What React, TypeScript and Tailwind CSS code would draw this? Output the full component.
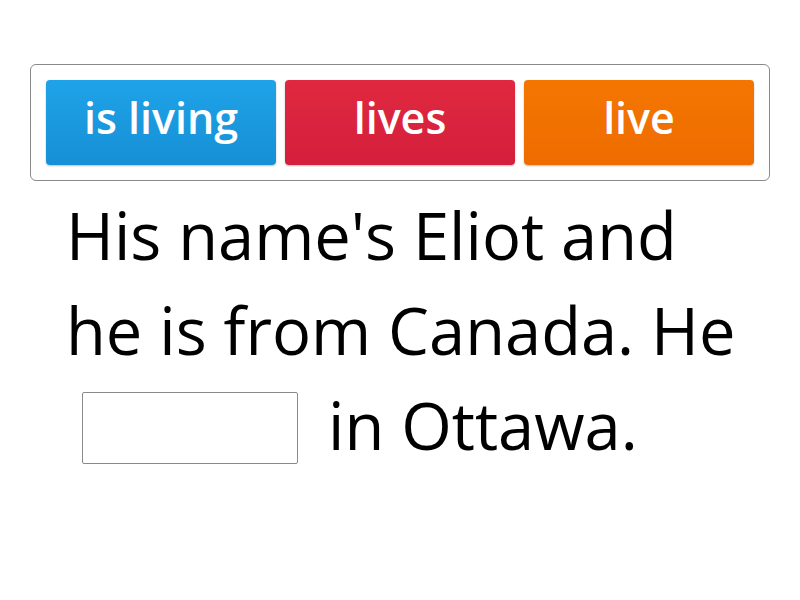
export default function App() {
  const words = [
    { label: 'is living', cls: 'bg-gradient-to-b from-[#1fa3e8] to-[#168fd6]' },
    { label: 'lives', cls: 'bg-gradient-to-b from-[#e0283f] to-[#d41f3d]' },
    { label: 'live', cls: 'bg-gradient-to-b from-[#f47600] to-[#ee6c00]' },
  ]

  return (
    <div className="w-[800px] h-[600px] bg-white" style={{ fontFamily: '"Open Sans", sans-serif' }}>
      <div className="pt-[64px] px-[30px]">
        <div className="flex gap-[9px] p-[15px] border border-[#8a8a8a] rounded-[6px] h-[117px]">
          {words.map((w) => (
            <div
              key={w.label}
              className={`w-[230px] h-[85px] rounded-[4px] flex items-center justify-center text-white font-semibold text-[43px] shadow-[0_1px_2px_rgba(0,0,0,0.25)] ${w.cls}`}
            >
              <span className="-mt-[9px]">{w.label}</span>
            </div>
          ))}
        </div>
      </div>
      <div className="pl-[66px] pr-[30px] pt-[7px] text-[65px] leading-[95px] text-black">
        <div>His name's Eliot and</div>
        <div>he is from Canada. He</div>
        <div className="flex items-center">
          <div className="ml-[16px] mr-[30px] mt-[4px] w-[216px] h-[72px] border border-[#8a8a8a] rounded-[2px]" />
          <span>in Ottawa.</span>
        </div>
      </div>
    </div>
  )
}
